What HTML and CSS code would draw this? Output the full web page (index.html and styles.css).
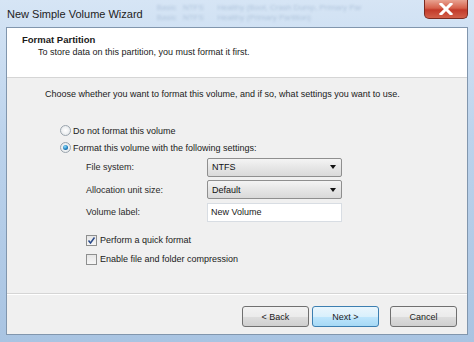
FILE: index.html
```html
<!DOCTYPE html>
<html lang="en">
<head>
    <meta charset="UTF-8">
    <title>New Simple Volume Wizard</title>
    <link rel="stylesheet" href="styles.css">
</head>
<body>
    <div class="window">
        <div class="titlebar">
            <span class="title">New Simple Volume Wizard</span>
            <div class="ghost">
                <span>Basic&nbsp;&nbsp;&nbsp;NTFS&nbsp;&nbsp;&nbsp;&nbsp;&nbsp;&nbsp;Healthy (Boot, Crash Dump, Primary Par</span>
                <span>Basic&nbsp;&nbsp;&nbsp;NTFS&nbsp;&nbsp;&nbsp;&nbsp;&nbsp;&nbsp;Healthy (Primary Partition)</span>
            </div>
            <div class="close">
                <svg width="16" height="12" viewBox="0 0 16 12">
                    <path d="M3 1 L13 11 M13 1 L3 11" stroke="#fff" stroke-width="3" stroke-linecap="square"/>
                </svg>
            </div>
        </div>
        <div class="client">
            <div class="header">
                <div class="h-title">Format Partition</div>
                <div class="h-sub">To store data on this partition, you must format it first.</div>
            </div>
            <div class="body">
                <p class="intro">Choose whether you want to format this volume, and if so, what settings you want to use.</p>
                <div class="option">
                    <span class="radio"></span>Do not format this volume
                </div>
                <div class="option">
                    <span class="radio on"></span>Format this volume with the following settings:
                </div>
                <div class="settings">
                    <div class="row">
                        <span class="lbl">File system:</span>
                        <div class="select">NTFS<span class="arrow"></span></div>
                    </div>
                    <div class="row">
                        <span class="lbl">Allocation unit size:</span>
                        <div class="select">Default<span class="arrow"></span></div>
                    </div>
                    <div class="row">
                        <span class="lbl">Volume label:</span>
                        <div class="input">New Volume</div>
                    </div>
                    <div class="check-row first">
                        <span class="check">
                            <svg width="9" height="9" viewBox="0 0 9 9"><path d="M1.5 4.5 L3.5 7 L7.5 1.5" stroke="#2a4a8a" stroke-width="1.5" fill="none"/></svg>
                        </span>Perform a quick format
                    </div>
                    <div class="check-row">
                        <span class="check"></span>Enable file and folder compression
                    </div>
                </div>
            </div>
            <div class="footer">
                <button class="btn">&lt; Back</button>
                <button class="btn default">Next &gt;</button>
                <button class="btn cancel">Cancel</button>
            </div>
        </div>
    </div>
</body>
</html>
```
FILE: styles.css
```css
*{
    margin: 0;padding: 0;
    box-sizing: border-box;
}
body{
    width: 474px;
    height: 342px;
    overflow: hidden;
    font-family: "Liberation Sans", Arial, sans-serif;
    font-size: 9px;
    color: #1a1a1a;
}
.window{
    width: 474px;
    height: 342px;
    padding: 0 6px 7px 6px;
    display: flex;
    flex-direction: column;
    background: linear-gradient(180deg, #d6e5f5 0%, #bcd3ec 40%, #a9c4e2 100%);
}
.titlebar{
    height: 27px;
    display: flex;
    align-items: flex-start;
}
.title{
    font-size: 11px;
    color: #222;
    margin: 8px 0 0 1px;
    white-space: nowrap;
    width: 140px;
}
.ghost{
    display: flex;
    flex-direction: column;
    margin: 3px 0 0 10px;
    font-size: 8px;
    line-height: 10px;
    color: #b2c6dd;
    filter: blur(1.3px);
    white-space: nowrap;
    overflow: hidden;
    width: 268px;
}
.close{
    width: 44px;
    height: 19px;
    margin-left: auto;
    display: flex;
    align-items: center;
    justify-content: center;
    border: 1px solid #7a2a20;
    border-top: none;
    border-radius: 0 0 5px 5px;
    background: linear-gradient(180deg, #e8a291 0%, #d6614c 45%, #c23a2a 55%, #d2604a 100%);
}
.client{
    flex: 1;
    display: flex;
    flex-direction: column;
    border: 1px solid #8196ad;
    background: #f0f0f0;
}
.header{
    height: 50px;
    background: #fff;
    border-bottom: 1px solid #d5d5d5;
    padding: 6px 0 0 15px;
}
.h-title{
    font-weight: bold;
    font-size: 9.5px;
    line-height: 12px;
}
.h-sub{
    padding-left: 16px;
    line-height: 13px;
}
.body{
    flex: 1;
    padding: 10px 0 0 38px;
    border-bottom: 1px solid #d5d5d5;
    box-shadow: 0 1px 0 #fff;
}
.intro{
    line-height: 12px;
    margin-bottom: 22px;
}
.option{
    display: flex;
    align-items: center;
    height: 17px;
    margin-left: 15px;
}
.radio{
    width: 11px;
    height: 11px;
    border-radius: 50%;
    border: 1px solid #9aa4ad;
    background: radial-gradient(circle, #ffffff 0%, #dfe3e6 100%);
    margin-right: 2px;
    display: flex;
    align-items: center;
    justify-content: center;
}
.radio.on::after{
    content: "";
    width: 5px;
    height: 5px;
    border-radius: 50%;
    background: radial-gradient(circle at 40% 35%, #8fe0ff 0%, #1a78b8 60%, #0c4a80 100%);
}
.settings{
    padding: 0 0 0 41px;
}
.row{
    display: flex;
    align-items: center;
    height: 22.5px;
}
.lbl{
    width: 121px;
    color: #2a2a2a;
}
.select{
    width: 135px;
    height: 19px;
    border: 1px solid #8f8f8f;
    border-radius: 2px;
    background: linear-gradient(180deg, #f4f4f4 0%, #e6e6e6 50%, #d9d9d9 100%);
    display: flex;
    align-items: center;
    padding-left: 4px;
    color: #111;
}
.arrow{
    margin-left: auto;
    margin-right: 5px;
    width: 0;
    height: 0;
    border-left: 3.5px solid transparent;
    border-right: 3.5px solid transparent;
    border-top: 4px solid #111;
}
.input{
    width: 135px;
    height: 19px;
    border: 1px solid #d8dde3;
    background: #fff;
    padding: 3px 0 0 3px;
}
.check-row{
    display: flex;
    align-items: center;
    height: 19px;
}
.check-row.first{
    margin-top: 7px;
}
.check{
    width: 11px;
    height: 11px;
    border: 1px solid #8e8f8f;
    background: linear-gradient(180deg, #e6e6e6 0%, #f6f6f6 100%);
    margin-right: 3px;
    display: flex;
    align-items: center;
    justify-content: center;
}
.footer{
    height: 40px;
    display: flex;
    align-items: flex-start;
    justify-content: flex-end;
    padding: 12px 10px 0 0;
}
button{
    font-family: "Liberation Sans", Arial, sans-serif;
    font-size: 9px;
    color: #222;
}
.btn{
    width: 67px;
    height: 21px;
    border: 1px solid #707070;
    border-radius: 3px;
    background: linear-gradient(180deg, #f2f2f2 0%, #ebebeb 50%, #dddddd 51%, #cfcfcf 100%);
    margin-left: 3px;
}
.btn.default{
    border-color: #3c7fb1;
    background: linear-gradient(180deg, #eaf6fd 0%, #d9f0fc 50%, #bee6fd 51%, #a7d9f5 100%);
}
.btn.cancel{
    margin-left: 11px;
}
```
